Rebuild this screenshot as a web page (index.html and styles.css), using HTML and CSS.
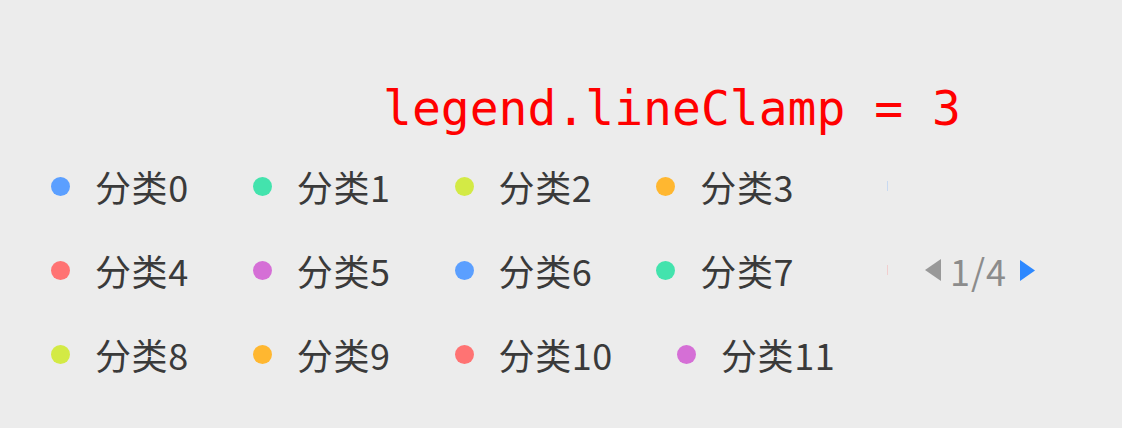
FILE: index.html
```html
<!DOCTYPE html>
<html lang="zh-CN">
<head>
    <meta charset="UTF-8">
    <meta name="viewport" content="width=device-width, initial-scale=1.0">
    <title>legend.lineClamp</title>
    <link rel="stylesheet" href="styles.css">
</head>
<body>
    <div class="title">legend.lineClamp = 3</div>

    <div class="legend">
        <div class="legend-page">
            <div class="legend-row">
                <div class="legend-item"><span class="marker c-blue"></span><span class="label">分类0</span></div>
                <div class="legend-item"><span class="marker c-green"></span><span class="label">分类1</span></div>
                <div class="legend-item"><span class="marker c-lime"></span><span class="label">分类2</span></div>
                <div class="legend-item"><span class="marker c-orange"></span><span class="label">分类3</span></div>
                <span class="row-edge c-blue"></span>
            </div>
            <div class="legend-row">
                <div class="legend-item"><span class="marker c-red"></span><span class="label">分类4</span></div>
                <div class="legend-item"><span class="marker c-purple"></span><span class="label">分类5</span></div>
                <div class="legend-item"><span class="marker c-blue"></span><span class="label">分类6</span></div>
                <div class="legend-item"><span class="marker c-green"></span><span class="label">分类7</span></div>
                <span class="row-edge c-red"></span>
            </div>
            <div class="legend-row">
                <div class="legend-item"><span class="marker c-lime"></span><span class="label">分类8</span></div>
                <div class="legend-item"><span class="marker c-orange"></span><span class="label">分类9</span></div>
                <div class="legend-item"><span class="marker c-red"></span><span class="label">分类10</span></div>
                <div class="legend-item"><span class="marker c-purple"></span><span class="label">分类11</span></div>
                <span class="row-edge c-lime"></span>
            </div>
        </div>

        <div class="pager">
            <svg class="pager-btn" width="17" height="22" viewBox="0 0 17 22"><polygon points="16,0 16,22 0,11" fill="#999999"/></svg>
            <span class="pager-text">1/4</span>
            <svg class="pager-btn" width="15" height="21" viewBox="0 0 15 21"><polygon points="0,0 0,21 15,10.5" fill="#2d88ff"/></svg>
        </div>
    </div>
</body>
</html>
```

FILE: styles.css
```css
* {
    margin: 0;
    padding: 0;
    box-sizing: border-box;
}

body {
    background-color: #ececec;
    font-family: "Noto Sans CJK SC", "Noto Sans", sans-serif;
}

/* Heading */
.title {
    margin-top: 80px;
    padding-left: 383px;
    font-family: "DejaVu Sans Mono", monospace;
    font-size: 48px;
    line-height: 56px;
    color: #ff0000;
}

/* Legend */
.legend {
    display: flex;
    align-items: center;
    margin-top: 8px;
    padding-left: 51px;
}

.legend-page {
    width: 837px;
    overflow: hidden;
}

.legend-row {
    display: flex;
    align-items: center;
    height: 84px;
}

.legend-item {
    display: flex;
    align-items: center;
    margin-right: 64px;
    flex-shrink: 0;
}

.marker {
    width: 19px;
    height: 19px;
    border-radius: 50%;
    margin-right: 25px;
}

.label {
    font-size: 36px;
    line-height: 40px;
    letter-spacing: 0.6px;
    color: #3a3a3a;
    font-variant-numeric: proportional-nums;
}

.row-edge {
    margin-left: auto;
    width: 1px;
    height: 10px;
    opacity: 0.25;
}

.c-blue { background-color: #5b9fff; }
.c-green { background-color: #43e3ad; }
.c-lime { background-color: #d3ea45; }
.c-orange { background-color: #ffb730; }
.c-red { background-color: #ff7373; }
.c-purple { background-color: #d56fd6; }

/* Pager */
.pager {
    display: flex;
    align-items: center;
    margin-left: 37px;
}

.pager-text {
    margin: 0 13px 0 8px;
    font-size: 36px;
    line-height: 40px;
    letter-spacing: 1px;
    color: #8c8c8c;
}
```
